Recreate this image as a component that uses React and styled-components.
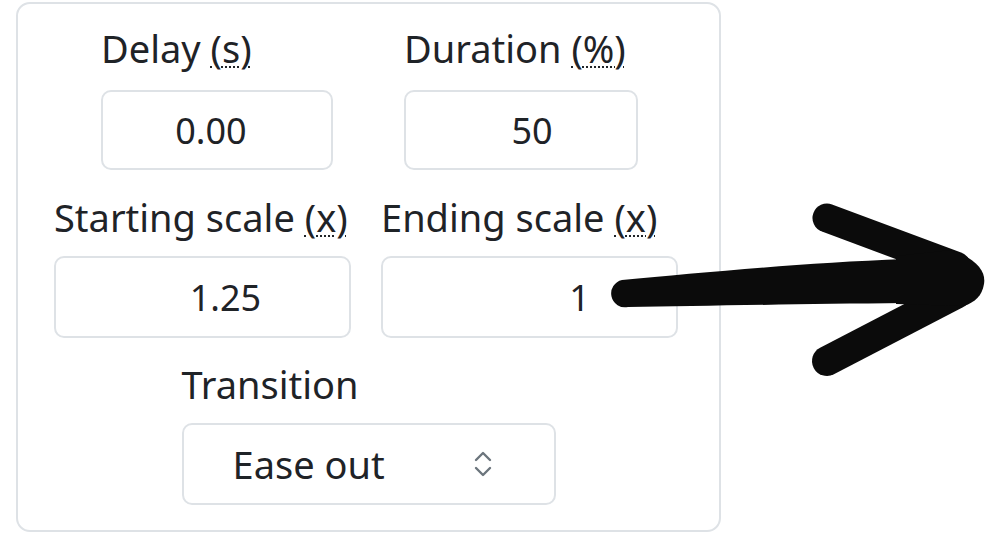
import React from "react";
import styled, { createGlobalStyle } from "styled-components";

const Global = createGlobalStyle`
  html, body { margin: 0; padding: 0; background: #ffffff; }
  body { font-family: "Noto Sans", "Open Sans", sans-serif; color: #212529; }
  * { box-sizing: border-box; }
`;

const Page = styled.div`
  position: relative;
  width: 1000px;
  height: 533px;
  overflow: hidden;
  padding: 2px 0 0 16px;
`;

const Card = styled.section`
  width: 705px;
  height: 530px;
  border: 2px solid #dee2e6;
  border-radius: 14px;
  background: #fff;
  padding-top: 25px;
  display: flex;
  flex-direction: column;
  align-items: center;
`;

const Row = styled.div`
  display: flex;
  justify-content: center;
  gap: ${(p) => p.$gap}px;
  margin-top: ${(p) => p.$top || 0}px;
  margin-left: ${(p) => (p.$dx > 0 ? 2 * p.$dx : 0)}px;
  margin-right: ${(p) => (p.$dx < 0 ? -2 * p.$dx : 0)}px;
`;

const Field = styled.label`
  display: flex;
  flex-direction: column;
  align-items: flex-start;
  gap: ${(p) => p.$gap}px;
  width: ${(p) => p.$w}px;
`;

const LabelText = styled.span`
  font-size: 38px;
  line-height: 38px;
  color: #1f2327;
  white-space: nowrap;
`;

const Abbr = styled.abbr`
  text-decoration: underline dotted;
  text-decoration-thickness: 2px;
  text-underline-offset: 3px;
  cursor: help;
`;

const Input = styled.input`
  width: 100%;
  height: ${(p) => p.$h}px;
  border: 2px solid #dee2e6;
  border-radius: 10px;
  background: #fff;
  font-family: "Noto Sans", "Open Sans", sans-serif;
  font-size: 36px;
  color: #1f2327;
  text-align: center;
  padding: 0 ${(p) => (p.$shift < 0 ? -2 * p.$shift : 0)}px 0
    ${(p) => (p.$shift > 0 ? 2 * p.$shift : 0)}px;
  outline: none;
`;

const SelectBox = styled.button`
  width: 374px;
  height: 82px;
  border: 2px solid #dee2e6;
  border-radius: 10px;
  background: #fff;
  display: flex;
  align-items: center;
  justify-content: space-between;
  padding: 0 62px 0 49px;
  font-family: "Noto Sans", "Open Sans", sans-serif;
  font-size: 38px;
  color: #1f2327;
  cursor: pointer;
`;

const Chevrons = styled.svg`
  width: 18px;
  height: 26px;
  flex: none;
`;

const ArrowLayer = styled.svg`
  position: absolute;
  left: 0;
  top: 0;
  width: 1000px;
  height: 533px;
  pointer-events: none;
`;

function NumField({ label, unit, value, w, h, gap, shift }) {
  return (
    <Field $w={w} $gap={gap}>
      <LabelText>
        {label} <Abbr title={unit}>({unit})</Abbr>
      </LabelText>
      <Input type="text" inputMode="decimal" defaultValue={value} $h={h} $shift={shift} />
    </Field>
  );
}

export default function App() {
  return (
    <>
      <Global />
      <Page>
        <Card>
          <Row $gap={71} $dx={1}>
            <NumField label="Delay" unit="s" value="0.00" w={232} h={80} gap={23} shift={-6} />
            <NumField label="Duration" unit="%" value="50" w={234} h={80} gap={23} shift={11} />
          </Row>
          <Row $gap={30} $top={28} $dx={-2.5}>
            <NumField label="Starting scale" unit="x" value="1.25" w={297} h={82} gap={20} shift={23} />
            <NumField label="Ending scale" unit="x" value="1" w={297} h={82} gap={20} shift={50} />
          </Row>
          <Row $gap={0} $top={27}>
            <Field $w={374} $gap={20}>
              <LabelText>Transition</LabelText>
              <SelectBox type="button">
                <span>Ease out</span>
                <Chevrons viewBox="0 0 18 26" fill="none" stroke="#6c757d" strokeWidth="2.4" strokeLinecap="round" strokeLinejoin="round">
                  <polyline points="2,9 9,2 16,9" />
                  <polyline points="2,17 9,24 16,17" />
                </Chevrons>
              </SelectBox>
            </Field>
          </Row>
        </Card>
        <ArrowLayer viewBox="0 0 1000 533">
          <g fill="#0b0b0b" stroke="#0b0b0b" strokeLinecap="round" strokeLinejoin="round">
            <path
              stroke="none"
              d="M 622 280
                 C 700 273, 800 263, 905 259
                 L 905 303
                 C 800 304, 700 306, 628 307
                 A 13.5 13.5 0 1 1 622 280 Z"
            />
            <line x1="827" y1="218" x2="956" y2="266" strokeWidth="29" />
            <line x1="827" y1="361" x2="956" y2="294" strokeWidth="30" />
            <path
              stroke="none"
              d="M 896 256 L 952 250 C 978 260, 986 272, 984 284 C 982 296, 975 302, 964 306 L 896 304 Z"
            />
          </g>
        </ArrowLayer>
      </Page>
    </>
  );
}
